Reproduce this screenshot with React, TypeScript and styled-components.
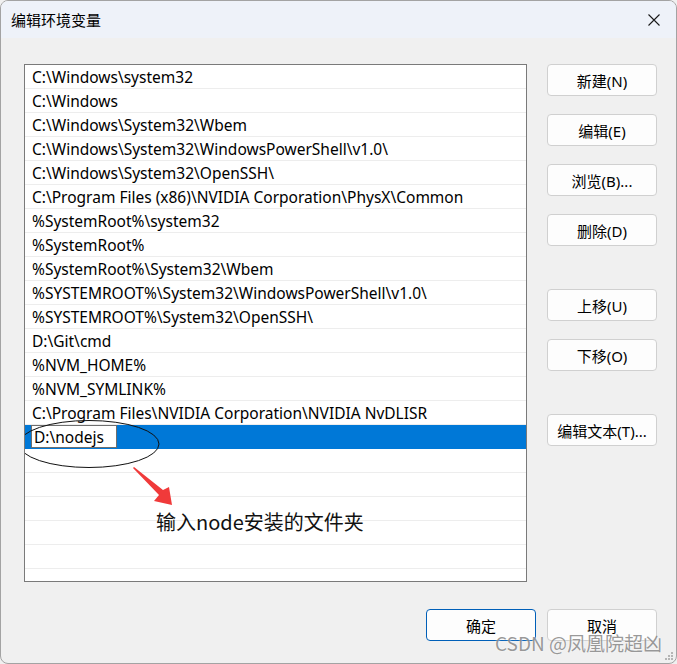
import React from 'react';
import styled, { createGlobalStyle, css } from 'styled-components';

const GlobalStyle = createGlobalStyle`
  html, body {
    margin: 0;
    padding: 0;
    background: #f0f0f0;
  }
  * {
    box-sizing: border-box;
  }
`;

const uiFont = `"Noto Sans", "Noto Sans CJK SC", sans-serif`;

const Window = styled.div`
  position: relative;
  width: 677px;
  height: 664px;
  display: flex;
  flex-direction: column;
  background: #f0f0f0;
  border: 1px solid #a3a3a3;
  border-radius: 8px;
  overflow: hidden;
  font-family: ${uiFont};
  color: #000;
`;

const TitleBar = styled.div`
  height: 37px;
  flex: none;
  display: flex;
  align-items: center;
  justify-content: space-between;
  padding: 0 14px 0 10px;
  background: #eef2f9;
`;

const Title = styled.span`
  font-size: 15px;
  font-family: "Noto Sans CJK SC", sans-serif;
`;

const CloseButton = styled.div`
  width: 16px;
  height: 16px;
  display: flex;
  align-items: center;
  justify-content: center;
`;

const Body = styled.div`
  flex: none;
  display: grid;
  grid-template-columns: 503px 110px;
  align-items: start;
  column-gap: 20px;
  padding: 26px 19px 0 23px;
`;

const List = styled.div`
  position: relative;
  height: 518px;
  background: #fff;
  border: 1px solid #7a7a7a;
  overflow: hidden;
`;

const Row = styled.div<{ $selected?: boolean }>`
  height: 24px;
  display: flex;
  align-items: center;
  padding-left: 7px;
  font-size: 15.5px;
  white-space: nowrap;
  border-bottom: 1px solid #ededed;
  ${(p) =>
    p.$selected &&
    css`
      background: #0078d7;
      border-bottom-color: #0078d7;
      padding-left: 6px;
    `}
`;

const EditBox = styled.div`
  width: 86px;
  height: 23px;
  display: flex;
  align-items: center;
  padding-left: 2px;
  background: #fff;
  border: 1px solid #6e6e6e;
  font-size: 15.5px;
`;

const Side = styled.div`
  display: flex;
  flex-direction: column;
  gap: 18px;
`;

const Button = styled.button<{ $spaced?: boolean; $primary?: boolean }>`
  width: 110px;
  height: 32px;
  flex: none;
  margin: ${(p) => (p.$spaced ? '25px 0 0' : '0')};
  padding: 0;
  background: #fdfdfd;
  border: 1px solid ${(p) => (p.$primary ? '#005fb8' : '#d0d0d0')};
  border-radius: 4px;
  font-family: ${uiFont};
  font-size: 15px;
  color: #000;
`;

const Footer = styled.div`
  display: flex;
  justify-content: flex-end;
  gap: 11px;
  padding: 27px 19px 0 0;
`;

const Overlay = styled.svg`
  position: absolute;
  left: 0;
  top: 0;
  pointer-events: none;
`;

const Note = styled.div`
  position: absolute;
  left: 131px;
  top: 442px;
  font-family: "Noto Sans CJK SC", sans-serif;
  font-size: 20px;
  color: #111;
  white-space: nowrap;
`;

const Watermark = styled.div`
  position: absolute;
  right: 14px;
  bottom: 7px;
  font-family: "Noto Sans CJK SC", sans-serif;
  font-size: 19px;
  color: rgba(120, 120, 120, 0.75);
  text-shadow: 0 0 2px rgba(255, 255, 255, 0.9);
  white-space: nowrap;
`;

const Grip = styled.svg`
  position: absolute;
  right: 2px;
  bottom: 2px;
`;

const paths = [
  'C:\\Windows\\system32',
  'C:\\Windows',
  'C:\\Windows\\System32\\Wbem',
  'C:\\Windows\\System32\\WindowsPowerShell\\v1.0\\',
  'C:\\Windows\\System32\\OpenSSH\\',
  'C:\\Program Files (x86)\\NVIDIA Corporation\\PhysX\\Common',
  '%SystemRoot%\\system32',
  '%SystemRoot%',
  '%SystemRoot%\\System32\\Wbem',
  '%SYSTEMROOT%\\System32\\WindowsPowerShell\\v1.0\\',
  '%SYSTEMROOT%\\System32\\OpenSSH\\',
  'D:\\Git\\cmd',
  '%NVM_HOME%',
  '%NVM_SYMLINK%',
  'C:\\Program Files\\NVIDIA Corporation\\NVIDIA NvDLISR',
];

const emptyRows = 6;

const App = () => {
  return (
    <>
      <GlobalStyle />
      <Window>
        <TitleBar>
          <Title>编辑环境变量</Title>
          <CloseButton>
            <svg width="12" height="12" viewBox="0 0 12 12">
              <path d="M0.5 0.5 L11.5 11.5 M11.5 0.5 L0.5 11.5" stroke="#1a1a1a" strokeWidth="1.1" />
            </svg>
          </CloseButton>
        </TitleBar>
        <Body>
          <List>
            {paths.map((p) => (
              <Row key={p}>{p}</Row>
            ))}
            <Row $selected>
              <EditBox>D:\nodejs</EditBox>
            </Row>
            {Array.from({ length: emptyRows }, (_, i) => (
              <Row key={i} />
            ))}
            <Overlay width="503" height="518" viewBox="0 0 503 518">
              <ellipse cx="64" cy="379" rx="70" ry="23.5" fill="none" stroke="#111" strokeWidth="1" />
              <polygon
                points="108,403 109,402 138,425 144,422 147,440 129,436 134,430"
                fill="#f03a3a"
              />
            </Overlay>
            <Note>输入node安装的文件夹</Note>
          </List>
          <Side>
            <Button>新建(N)</Button>
            <Button>编辑(E)</Button>
            <Button>浏览(B)...</Button>
            <Button>删除(D)</Button>
            <Button $spaced>上移(U)</Button>
            <Button>下移(O)</Button>
            <Button $spaced>编辑文本(T)...</Button>
          </Side>
        </Body>
        <Footer>
          <Button $primary>确定</Button>
          <Button>取消</Button>
        </Footer>
        <Watermark>CSDN @凤凰院超凶</Watermark>
        <Grip width="10" height="10" viewBox="0 0 10 10">
          {[
            [8, 2],
            [5, 5],
            [8, 5],
            [2, 8],
            [5, 8],
            [8, 8],
          ].map(([x, y]) => (
            <rect key={`${x}-${y}`} x={x - 1} y={y - 1} width="2" height="2" fill="#b5b5b5" />
          ))}
        </Grip>
      </Window>
    </>
  );
};

export default App;
